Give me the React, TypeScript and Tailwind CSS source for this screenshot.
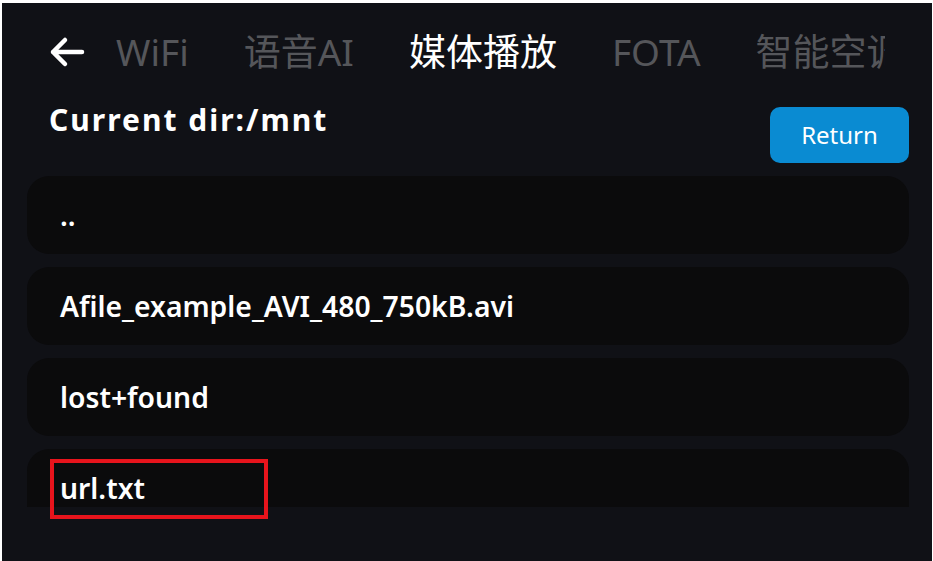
const tabs = [
  {label: 'WiFi', active: false},
  {label: '语音AI', active: false},
  {label: '媒体播放', active: true},
  {label: 'FOTA', active: false},
  {label: '智能空调', active: false},
];

const files = ['..', 'Afile_example_AVI_480_750kB.avi', 'lost+found', 'url.txt'];

export default function App() {
  return (
    <div className="relative w-[933px] h-[561px] bg-white overflow-hidden">
      <div
        className="mt-[3px] ml-[2px] mr-[1px] h-[558px] bg-[#101116] flex flex-col"
        style={{fontFamily: '"Noto Sans", "Noto Sans CJK SC", sans-serif'}}
      >
        {/* Tab header */}
        <div className="h-[97px] flex items-center pl-[47px]">
          <svg width="36" height="32" viewBox="0 0 36 32" fill="none" className="shrink-0">
            <path d="M33 16H4M16 4L4 16L16 28" stroke="white" strokeWidth="4.5" strokeLinecap="round" strokeLinejoin="round" />
          </svg>
          <div className="ml-[31px] w-[769px] overflow-hidden flex gap-[55px] whitespace-nowrap">
            {tabs.map((t) => (
              <span
                key={t.label}
                className={`text-[37px] leading-[50px] shrink-0 ${t.active ? 'text-white' : 'text-[#55565a]'}`}
              >
                {t.label}
              </span>
            ))}
          </div>
        </div>

        {/* Current dir + Return */}
        <div className="flex justify-between items-start pl-[47px] pr-[23px] pt-[7px]">
          <h2 className="text-[30px] leading-[32px] font-bold tracking-[2px] text-white -mt-[3px]">Current dir:/mnt</h2>
          <button className="w-[139px] h-[56px] rounded-[10px] bg-[#0a8bd2] text-white text-[24px] flex items-center justify-center">
            Return
          </button>
        </div>

        {/* File list */}
        <div className="mt-[13px] ml-[25px] mr-[23px] h-[331px] overflow-hidden flex flex-col gap-[13px]">
          {files.map((f) => (
            <div key={f} className="h-[78px] shrink-0 rounded-[22px] bg-[#0b0b0c] flex items-center pl-[33px]">
              <span className="text-[28.3px] font-semibold text-white leading-[36px]">{f}</span>
            </div>
          ))}
        </div>
      </div>

      {/* annotation box */}
      <div className="absolute left-[50px] top-[459px] w-[218px] h-[60px] border-[4px] border-[#e8141c]"></div>
    </div>
  );
}
